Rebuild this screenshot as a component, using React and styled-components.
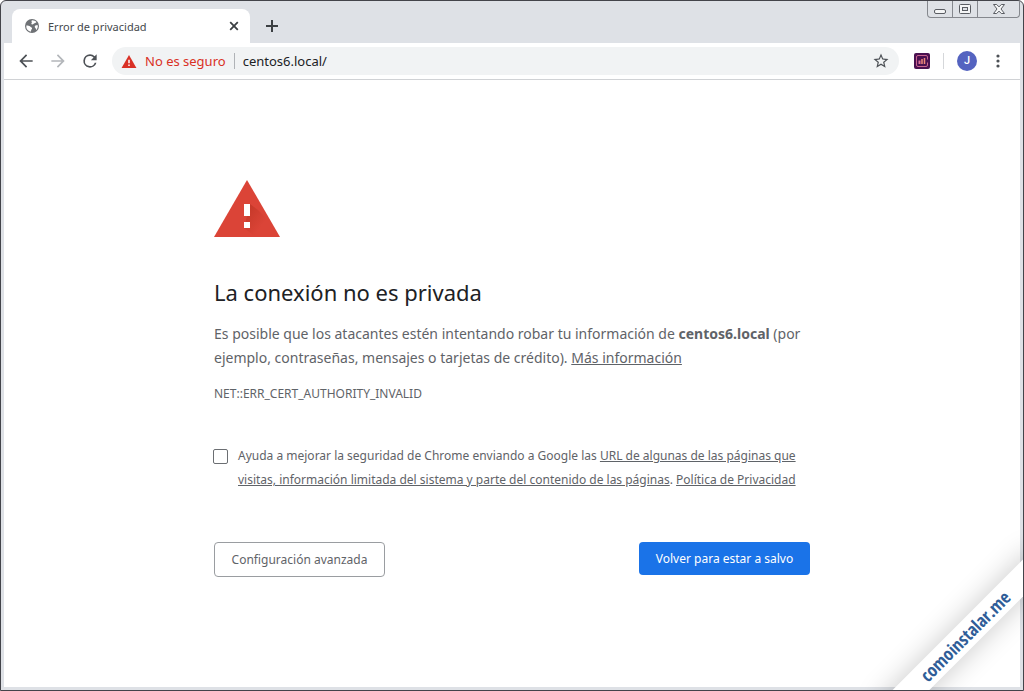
import React from 'react';
import styled, { createGlobalStyle } from 'styled-components';

const App = () => {
  return (
    <>
      <GlobalStyle />
      <StyledWindow>
        <StyledTabStrip>
          <StyledTab>
            <GlobeIcon />
            <span>Error de privacidad</span>
            <StyledIconButton $size='16px' aria-label='Cerrar pestaña'>
              <svg width='10' height='10' viewBox='0 0 10 10'>
                <path d='M1.2 1.2l7.6 7.6M8.8 1.2L1.2 8.8' stroke='#3c4043' strokeWidth='1.8' />
              </svg>
            </StyledIconButton>
          </StyledTab>
          <StyledIconButton $size='28px' aria-label='Nueva pestaña'>
            <svg width='12' height='12' viewBox='0 0 12 12'>
              <path d='M6 0v12M0 6h12' stroke='#3c4043' strokeWidth='2' />
            </svg>
          </StyledIconButton>
          <WindowControls />
        </StyledTabStrip>
        <Toolbar />
        <StyledPage>
          <Interstitial />
        </StyledPage>
        <StyledRibbon>comoinstalar.me</StyledRibbon>
      </StyledWindow>
    </>
  );
};

const WindowControls = () => (
  <StyledControls>
    <StyledControl $width='24px' aria-label='Minimizar'>
      <svg width='14' height='14' viewBox='0 0 14 14'>
        <rect x='1.5' y='7.5' width='11' height='4' rx='1.5' fill='#f4f5f6' stroke='#5a5d63' />
      </svg>
    </StyledControl>
    <StyledControl $width='25px' aria-label='Restaurar'>
      <svg width='14' height='14' viewBox='0 0 14 14'>
        <rect x='1.5' y='2.5' width='11' height='9' rx='1' fill='#f4f5f6' stroke='#5a5d63' />
        <rect x='4.5' y='5.5' width='5' height='3' fill='#dee1e6' stroke='#5a5d63' />
      </svg>
    </StyledControl>
    <StyledControl $width='42px' aria-label='Cerrar'>
      <svg width='14' height='14' viewBox='0 0 14 14'>
        <path
          d='M1.5 2.5h3.2L7 4.9l2.3-2.4h3.2L9 7l3.5 4.5H9.3L7 9.1l-2.3 2.4H1.5L5 7z'
          fill='#f4f5f6'
          stroke='#5a5d63'
        />
      </svg>
    </StyledControl>
  </StyledControls>
);

const Toolbar = () => (
  <StyledToolbar>
    <StyledIconButton $size='32px' aria-label='Atrás'>
      <ArrowIcon color='#4d5156' />
    </StyledIconButton>
    <StyledIconButton $size='32px' aria-label='Adelante' disabled>
      <ArrowIcon color='#b4b7bb' flip />
    </StyledIconButton>
    <StyledIconButton $size='32px' aria-label='Volver a cargar'>
      <svg width='20' height='20' viewBox='0 0 24 24' fill='#4d5156'>
        <path d='M17.65 6.35A7.96 7.96 0 0 0 12 4a8 8 0 1 0 7.73 10h-2.08A6 6 0 1 1 12 6c1.66 0 3.14.69 4.22 1.78L13 11h7V4z' />
      </svg>
    </StyledIconButton>
    <StyledOmnibox>
      <svg width='16' height='13' viewBox='0 0 16 14'>
        <path d='M8 0l8 14H0z' fill='#d93025' />
        <path d='M7.2 5h1.6v4H7.2zM7.2 10.2h1.6v1.6H7.2z' fill='#fff' />
      </svg>
      <StyledNotSecure>No es seguro</StyledNotSecure>
      <StyledUrl aria-label='Dirección' defaultValue='centos6.local/' />
      <StyledIconButton $size='20px' aria-label='Añadir a marcadores'>
        <svg width='18' height='18' viewBox='0 0 24 24' fill='#4d5156'>
          <path d='M22 9.24l-7.19-.62L12 2 9.19 8.63 2 9.24l5.46 4.73L5.82 21 12 17.27 18.18 21l-1.63-7.03zM12 15.4l-3.76 2.27 1-4.28-3.32-2.88 4.38-.38L12 6.1l1.71 4.04 4.38.38-3.32 2.88 1 4.28z' />
        </svg>
      </StyledIconButton>
    </StyledOmnibox>
    <StyledActions>
      <StyledIconButton $size='16px' aria-label='Extensión'>
        <svg width='16' height='16' viewBox='0 0 16 16'>
          <rect width='16' height='16' rx='2' fill='#4a1150' />
          <path
            d='M13.5 6.5V4A1.5 1.5 0 0 0 12 2.5H4A1.5 1.5 0 0 0 2.5 4v8A1.5 1.5 0 0 0 4 13.5h8a1.5 1.5 0 0 0 1.5-1.5V9.5'
            fill='none'
            stroke='#c9648f'
          />
          <path d='M5.5 11V7.500' stroke='#e0729a' strokeWidth='2' />
          <path d='M8 11V6M10.500 11V5' stroke='#f08a78' strokeWidth='1.500' />
        </svg>
      </StyledIconButton>
      <StyledDivider />
      <StyledAvatar>J</StyledAvatar>
      <StyledIconButton $size='16px' aria-label='Menú'>
        <svg width='4' height='14' viewBox='0 0 4 14' fill='#4d5156'>
          <circle cx='2' cy='2' r='1.600' />
          <circle cx='2' cy='7' r='1.600' />
          <circle cx='2' cy='12' r='1.600' />
        </svg>
      </StyledIconButton>
    </StyledActions>
  </StyledToolbar>
);

const Interstitial = () => (
  <StyledInterstitial>
    <svg width='66' height='57' viewBox='0 0 66 57'>
      <path d='M33 0l33 57H0z' fill='#db4437' />
      <path d='M36 24l8 6L54 40 52 57H42L30 48z' fill='url(#shade)' />
      <path d='M30 24h6v12h-6zM30 42h6v6h-6z' fill='#fff' />
      <defs>
        <linearGradient id='shade' x1='0' y1='0' x2='.7' y2='.7'>
          <stop offset='0' stopColor='#a52714' stopOpacity='.5' />
          <stop offset='1' stopColor='#a52714' stopOpacity='0' />
        </linearGradient>
      </defs>
    </svg>
    <h1>La conexión no es privada</h1>
    <p>
      Es posible que los atacantes estén intentando robar tu información de{' '}
      <strong>centos6.local</strong> (por ejemplo, contraseñas, mensajes o tarjetas de crédito).{' '}
      <a href='#info'>Más información</a>
    </p>
    <StyledErrorCode>NET::ERR_CERT_AUTHORITY_INVALID</StyledErrorCode>
    <StyledOptIn>
      <input type='checkbox' id='opt-in' />
      <label htmlFor='opt-in'>
        Ayuda a mejorar la seguridad de Chrome enviando a Google las{' '}
        <a href='#datos'>
          URL de algunas de las páginas que visitas, información limitada del sistema y parte del
          contenido de las páginas
        </a>
        . <a href='#privacidad'>Política de Privacidad</a>
      </label>
    </StyledOptIn>
    <StyledButtons>
      <StyledButton>Configuración avanzada</StyledButton>
      <StyledButton $primary>Volver para estar a salvo</StyledButton>
    </StyledButtons>
  </StyledInterstitial>
);

const ArrowIcon = ({ color, flip }) => (
  <svg width='20' height='20' viewBox='0 0 24 24' fill={color}>
    <path
      d={
        flip
          ? 'M12 4l-1.41 1.41L16.17 11H4v2h12.17l-5.58 5.59L12 20l8-8z'
          : 'M20 11H7.83l5.59-5.59L12 4l-8 8 8 8 1.41-1.41L7.83 13H20z'
      }
    />
  </svg>
);

const GlobeIcon = () => (
  <svg width='16' height='16' viewBox='0 0 16 16'>
    <circle cx='8' cy='8' r='7' fill='#6e7175' />
    <path
      d='M2.3 7.5c1.500.2 3.200.1 3.900 1 .6.900 1.700.8 1.900 1.800.1.900-.9 1.100-1 2.100-.1.600-.2 1-.5 1.300A6 6 0 0 1 2.300 7.500zM8.300 2.200c1.700 0 3.200.7 4.200 1.800-.7.500-1 1.200-1.900 1.300-1 .2-1.300 1.200-2.300 1.200-1 .1-1.200-.9-.7-1.500.5-.5.3-1.100-.1-1.500-.4-.4.200-1.200.8-1.300zM13.800 7.300c.2 1.700-.3 3.400-1.300 4.600-.8-.3-.5-1.300-1.100-1.800-.7-.6-1-1.700-.2-2.400.7-.6 1.700-.6 2.600-.4z'
      fill='#fff'
    />
  </svg>
);

const GlobalStyle = createGlobalStyle`
  * {
    box-sizing: border-box;
  }
  body {
    margin: 0;
    font-family: 'Noto Sans', 'Open Sans', sans-serif;
    background: #fff;
  }
  svg {
    display: block;
    flex: none;
  }
  button,
  input {
    font-family: inherit;
  }
`;

const StyledWindow = styled.div`
  position: relative;
  display: flex;
  flex-direction: column;
  min-height: 100vh;
  overflow: hidden;
  padding: 0 3px 3px;
  border: 1px solid #43444a;
  border-radius: 6px 6px 0 0;
  background: #dee1e6;
`;

const StyledTabStrip = styled.header`
  display: flex;
  align-items: flex-end;
  height: 42px;
  padding-left: 8px;
`;

const StyledTab = styled.div`
  display: flex;
  align-items: center;
  width: 238px;
  height: 34px;
  padding: 0 8px 0 12px;
  border-radius: 8px 8px 0 0;
  background: #fff;
  color: #45494d;
  font-size: 11px;
  span {
    flex: 1;
    margin-left: 8px;
  }
`;

const StyledIconButton = styled.button`
  display: flex;
  flex: none;
  align-items: center;
  justify-content: center;
  width: ${({ $size }) => $size};
  height: ${({ $size }) => $size};
  padding: 0;
  border: none;
  background: none;
  ${StyledTabStrip} > & {
    margin: 0 0 3px 8px;
  }
`;

const StyledControls = styled.div`
  display: flex;
  align-self: flex-start;
  margin-left: auto;
  border: 1px solid #85888e;
  border-top: none;
  border-radius: 0 0 4px 4px;
`;

const StyledControl = styled.button`
  display: flex;
  align-items: center;
  justify-content: center;
  width: ${({ $width }) => $width};
  height: 16px;
  padding: 0;
  border: none;
  background: none;
  & + & {
    border-left: 1px solid #85888e;
  }
`;

const StyledToolbar = styled.nav`
  display: flex;
  align-items: center;
  height: 36px;
  padding: 0 14px 0 6px;
  background: #fff;
`;

const StyledOmnibox = styled.div`
  display: flex;
  flex: 1;
  align-items: center;
  min-width: 0;
  height: 28px;
  margin-left: 6px;
  padding: 0 8px 0 9px;
  border-radius: 14px;
  background: #f1f3f4;
  font-size: 13px;
`;

const StyledNotSecure = styled.span`
  margin: 0 8px;
  padding-right: 8px;
  border-right: 1px solid #b0b3b7;
  color: #d93025;
  line-height: 16px;
  white-space: nowrap;
`;

const StyledUrl = styled.input`
  flex: 1;
  min-width: 0;
  height: 16px;
  padding: 0;
  border: none;
  outline: none;
  background: none;
  color: #202124;
  font-size: 13px;
  line-height: 16px;
`;

const StyledActions = styled.div`
  display: flex;
  align-items: center;
  gap: 13px;
  margin-left: 15px;
`;

const StyledDivider = styled.div`
  width: 1px;
  height: 16px;
  background: #d5d7da;
`;

const StyledAvatar = styled.div`
  width: 20px;
  height: 20px;
  border-radius: 50%;
  background: #5463c0;
  color: #fff;
  font-family: Roboto, sans-serif;
  font-size: 11px;
  font-weight: 500;
  line-height: 20px;
  text-align: center;
`;

const StyledPage = styled.main`
  flex: 1;
  border-top: 1px solid #d0d2d5;
  background: #fff;
`;

const StyledInterstitial = styled.div`
  max-width: 596px;
  margin: 0 auto;
  padding-top: 100px;
  color: #5f6368;
  h1 {
    margin: 40px 0 15px;
    color: #202124;
    font-size: 22px;
    font-weight: 400;
    line-height: 30px;
  }
  p {
    margin: 0;
    font-size: 14px;
    line-height: 24px;
  }
  a {
    color: inherit;
  }
`;

const StyledErrorCode = styled.div`
  margin-top: 12px;
  font-size: 12px;
  line-height: 24px;
`;

const StyledOptIn = styled.div`
  display: flex;
  align-items: flex-start;
  margin-top: 38px;
  font-size: 12px;
  line-height: 24px;
  input {
    flex: none;
    appearance: none;
    width: 15px;
    height: 15px;
    margin: 5px 10px 0 -1px;
    border: 1px solid #6b6e72;
    border-radius: 2px;
    background: #fff;
  }
`;

const StyledButtons = styled.div`
  display: flex;
  align-items: flex-start;
  justify-content: space-between;
  margin-top: 50px;
`;

const StyledButton = styled.button`
  min-width: 171px;
  height: ${({ $primary }) => ($primary ? '33px' : '35px')};
  padding: 0 15px;
  border: ${({ $primary }) => ($primary ? 'none' : '1px solid #9a9da1')};
  border-radius: 4px;
  background: ${({ $primary }) => ($primary ? '#1a73e8' : '#fff')};
  color: ${({ $primary }) => ($primary ? '#fff' : '#5f6368')};
  font-size: 12px;
`;

const StyledRibbon = styled.div`
  position: absolute;
  right: -52px;
  bottom: 41px;
  width: 220px;
  height: 26px;
  transform: rotate(-45deg);
  background: #fff;
  box-shadow: 0 0 28px rgba(0, 0, 0, 0.22);
  color: #2f5d98;
  font-family: 'Liberation Sans Narrow', 'Open Sans Condensed', 'Liberation Sans', sans-serif;
  font-size: 18px;
  font-weight: 700;
  line-height: 26px;
  text-align: center;
`;

export default App;
